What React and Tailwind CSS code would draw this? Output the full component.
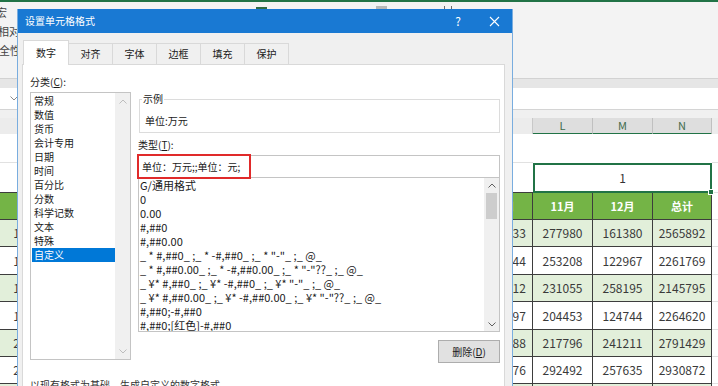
import React from "react";

const GRID = "grid grid-cols-[74px_399px_60px_60px_60px_59px_1fr]";

const CATEGORIES = ["常规", "数值", "货币", "会计专用", "日期", "时间", "百分比", "分数", "科学记数", "文本", "特殊", "自定义"];

const FORMATS = [
  "G/通用格式",
  "0",
  "0.00",
  "#,##0",
  "#,##0.00",
  '_ * #,##0_ ;_ * -#,##0_ ;_ * "-"_ ;_ @_ ',
  '_ * #,##0.00_ ;_ * -#,##0.00_ ;_ * "-"??_ ;_ @_ ',
  '_ ¥* #,##0_ ;_ ¥* -#,##0_ ;_ ¥* "-"_ ;_ @_ ',
  '_ ¥* #,##0.00_ ;_ ¥* -#,##0.00_ ;_ ¥* "-"??_ ;_ @_ ',
  "#,##0;-#,##0",
  "#,##0;[红色]-#,##0",
];

const ROWS = [
  { h: "h-[27px]", tint: true, v: ["1953241", "", "2418833", "277980", "161380", "2565892"] },
  { h: "h-[28px]", tint: false, v: ["1784203", "", "2106544", "253208", "122967", "2261769"] },
  { h: "h-[27px]", tint: true, v: ["1662590", "", "1980412", "231055", "258195", "2145795"] },
  { h: "h-[28px]", tint: false, v: ["1897415", "", "2133297", "204453", "124744", "2264620"] },
  { h: "h-[27px]", tint: true, v: ["2210387", "", "2517888", "217796", "241211", "2791429"] },
  { h: "h-[27px]", tint: false, v: ["2374556", "", "2648876", "292492", "257635", "2930872"] },
  { h: "h-[28px]", tint: true, v: ["2156320", "", "2409151", "268114", "213508", "2587046"] },
];

function Chevron({ up, color }) {
  return (
    <svg width="8" height="5" viewBox="0 0 8 5" fill="none" stroke={color} strokeWidth="1">
      <path d={up ? "M0.5 4.5 L4 1 L7.5 4.5" : "M0.5 0.5 L4 4 L7.5 0.5"} />
    </svg>
  );
}

function Sheet() {
  return (
    <div className="flex flex-col">
      <div className="h-[2px] bg-[#217346]" />

      {/* ribbon (Developer tab, mostly under the dialog) */}
      <div className="h-[76px] bg-[#f3f3f3] text-[#444] text-[11px] pt-[3px] flex flex-col gap-[5px]">
        <div className="flex h-[14px] items-start">
          <span className="ml-[-26px] w-[42px] whitespace-nowrap">录制宏</span>
          <span className="ml-[240px] mt-[2px] w-[11px] h-[2px] bg-[#2f6b45]" />
          <span className="ml-[109px] mt-[1px] w-[11px] h-[3px] bg-[#b9b9b9]" />
          <span className="ml-[57px] mt-[1px] w-[8px] h-[4px] border border-[#6b6b6b] border-t-0" />
        </div>
        <div className="h-[14px] ml-[-24px] whitespace-nowrap">使用相对引用</div>
        <div className="h-[14px] ml-[-23px] whitespace-nowrap">宏安全性</div>
      </div>

      <div className="h-[10px] bg-[#e6e6e6] border-t border-[#d2d2d2]" />
      <div className="h-[22px] bg-white border-b border-[#d4d4d4] flex items-center pl-[10px]">
        <Chevron color="#8a8a8a" />
      </div>
      <div className="h-[8px] bg-[#f0f0f0]" />

      {/* column headers */}
      <div className={`${GRID} h-[16px] text-[11px] text-[#555] leading-[15px]`}>
        <div className="bg-[#ececec] border-r border-b border-[#c8c8c8] text-center">A</div>
        <div className="bg-[#ececec] border-r border-b border-[#c8c8c8]" />
        <div className="bg-[#ececec] border-r border-b border-[#c8c8c8] text-center">K</div>
        <div className="bg-[#dedede] border-r border-[#c0c0c0] border-b-2 border-b-[#217346] text-center text-[#3f6b4c]">L</div>
        <div className="bg-[#dedede] border-r border-[#c0c0c0] border-b-2 border-b-[#217346] text-center text-[#3f6b4c]">M</div>
        <div className="bg-[#dedede] border-r border-[#c0c0c0] border-b-2 border-b-[#217346] text-center text-[#3f6b4c]">N</div>
        <div className="bg-[#ececec] border-b border-[#c8c8c8]" />
      </div>

      {/* blank row */}
      <div className={`${GRID} h-[29px] bg-white`}>
        <div className="border-b border-[#e1e1e1]" />
        <div className="border-b border-[#e1e1e1]" />
        <div className="border-b border-[#e1e1e1]" />
        <div className="col-span-3" />
        <div className="border-b border-[#e1e1e1]" />
      </div>

      {/* merged title row */}
      <div className={`${GRID} h-[30px] bg-white text-[#333]`}>
        <div className="border-b border-[#3d3d3d]" />
        <div className="border-b border-[#3d3d3d]" />
        <div className="border-b border-[#3d3d3d]" />
        <div className="col-span-3 relative border-2 border-[#217346] flex items-center justify-center text-[12px]">
          1
          <span className="absolute right-[-4px] bottom-[-4px] w-[6px] h-[6px] bg-[#217346] border border-white" />
        </div>
        <div className="border-b border-[#e1e1e1]" />
      </div>

      {/* table header */}
      <div className={`${GRID} h-[27px] text-white font-bold text-[11px]`}>
        <div className="bg-[#74b446] border-r border-b border-[#3d3d3d] flex items-center justify-center">1月</div>
        <div className="bg-[#74b446] border-r border-b border-[#3d3d3d]" />
        <div className="bg-[#74b446] border-r border-b border-[#3d3d3d] flex items-center justify-center">10月</div>
        <div className="bg-[#74b446] border-r border-b border-[#3d3d3d] flex items-center justify-center">11月</div>
        <div className="bg-[#74b446] border-r border-b border-[#3d3d3d] flex items-center justify-center">12月</div>
        <div className="bg-[#74b446] border-r border-b border-[#3d3d3d] flex items-center justify-center">总计</div>
        <div className="bg-white border-b border-[#e1e1e1]" />
      </div>

      {ROWS.map((r, i) => (
        <div key={i} className={`${GRID} ${r.h} text-[12px] text-[#3a3a3a]`}>
          {r.v.map((v, j) => (
            <div
              key={j}
              className={`${r.tint ? "bg-[#e2efda]" : "bg-white"} border-r border-b border-[#3d3d3d] flex items-center justify-center`}
            >
              {v}
            </div>
          ))}
          <div className="bg-white border-b border-[#e1e1e1]" />
        </div>
      ))}
    </div>
  );
}

function FormatDialog() {
  const tabs = ["对齐", "字体", "边框", "填充", "保护"];
  return (
    <div className="absolute left-[17px] top-[9px] w-[496px] h-[400px] bg-[#f0f0f0] border-x border-[#79addf] flex flex-col text-[#1a1a1a]">
      {/* title bar */}
      <div className="h-[24px] bg-[#1979d3] text-white flex items-center pl-[7px] pr-[12px]">
        <span>设置单元格格式</span>
        <span className="ml-auto w-[10px] text-center text-[12px]">?</span>
        <svg className="ml-[26px]" width="11" height="11" viewBox="0 0 11 11" stroke="white" strokeWidth="1.1">
          <path d="M1 1 L10 10 M10 1 L1 10" />
        </svg>
      </div>

      {/* tabs */}
      <div className="flex items-end pl-[5px] mt-[7px]">
        <div className="relative z-10 w-[46px] h-[25px] bg-white border border-b-0 border-[#d9d9d9] flex items-center justify-center">
          数字
        </div>
        {tabs.map((t) => (
          <div key={t} className="w-[44px] h-[22px] border-t border-r border-b border-[#d9d9d9] flex items-center justify-center">
            {t}
          </div>
        ))}
      </div>

      {/* tab page */}
      <div className="-mt-px ml-[4px] w-[483px] flex-1 bg-white border border-[#d9d9d9]">
        <div className="flex pl-[7px] pt-[10px]">
          {/* category list */}
          <div className="w-[101px] flex flex-col">
            <div className="h-[14px]">
              分类(<span className="underline">C</span>):
            </div>
            <div className="mt-[3px] h-[268px] border border-[#c4c4c4] flex">
              <div className="flex-1 pl-[1px] pt-[1px]">
                {CATEGORIES.map((c) => (
                  <div
                    key={c}
                    className={`h-[14px] w-[83px] pl-[2px] ${c === "自定义" ? "bg-[#0078d7] text-white" : ""}`}
                  >
                    {c}
                  </div>
                ))}
              </div>
              <div className="w-[15px] bg-[#f0f0f0] flex flex-col">
                <div className="h-[16px] flex items-center justify-center">
                  <Chevron up color="#bdbdbd" />
                </div>
                <div className="flex-1" />
                <div className="h-[16px] flex items-center justify-center">
                  <Chevron color="#bdbdbd" />
                </div>
              </div>
            </div>
          </div>

          {/* right side */}
          <div className="ml-[7px] w-[362px] pt-[17px] flex flex-col">
            <fieldset className="ml-[1px] border border-[#dcdcdc] pl-[2px] pb-[4px]">
              <legend className="px-[1px] h-[14px]">示例</legend>
              <div className="mt-[8px] pl-[3px] h-[14px]">单位:万元</div>
            </fieldset>

            <div className="mt-[5px] h-[14px]">
              类型(<span className="underline">T</span>):
            </div>
            <div className="relative mt-[3px] h-[23px] border border-[#c4c4c4] flex items-center pl-[3px]">
              单位：万元;;单位：元;
              <div className="absolute -left-[2px] -top-[2px] w-[114px] h-[25px] border-2 border-[#e02a2a]" />
            </div>

            <div className="h-[154px] border border-t-0 border-[#c4c4c4] flex text-[11px]">
              <div className="flex-1 pl-[1px] overflow-hidden">
                {FORMATS.map((f) => (
                  <div key={f} className="h-[14px] whitespace-pre">
                    {f}
                  </div>
                ))}
              </div>
              <div className="w-[15px] bg-[#f0f0f0] flex flex-col">
                <div className="h-[14px] flex items-center justify-center">
                  <Chevron up color="#606060" />
                </div>
                <div className="mt-[1px] mx-[2px] h-[26px] bg-[#cdcdcd]" />
                <div className="flex-1" />
                <div className="h-[14px] flex items-center justify-center">
                  <Chevron color="#606060" />
                </div>
              </div>
            </div>

            <div className="mt-[8px] flex justify-end">
              <div className="w-[62px] h-[23px] bg-[#e1e1e1] border border-[#adadad] flex items-center justify-center">
                删除(<span className="underline">D</span>)
              </div>
            </div>
          </div>
        </div>

        <div className="pl-[7px] mt-[15px] h-[14px] text-[#333]">以现有格式为基础，生成自定义的数字格式。</div>
      </div>
    </div>
  );
}

export default function App() {
  return (
    <div className="relative w-[718px] h-[386px] overflow-hidden bg-white font-['Noto_Sans_CJK_SC',sans-serif] text-[10px] leading-[14px] text-[#222]">
      <Sheet />
      <FormatDialog />
    </div>
  );
}
